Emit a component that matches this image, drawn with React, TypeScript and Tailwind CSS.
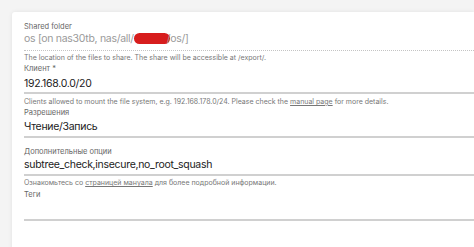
import React from 'react';

const font = { fontFamily: 'Inter, "Noto Sans", sans-serif' };

export default function App() {
  return (
    <div className="w-[474px] h-[247px] overflow-hidden bg-[#f4f4f4] pl-[12px] pt-[12px]" style={font}>
      <div className="h-[260px] bg-white rounded-tl-[3px] shadow-[0_0_4px_rgba(0,0,0,0.08)] pl-[12px] pt-[9px]">
        {/* Shared folder */}
        <div className="text-[7.5px] leading-[11px] text-[#666]">Shared folder</div>
        <div className="border-b border-dotted border-[#c4c4c4] pb-[4px]">
          <div className="text-[10.5px] tracking-[-0.3px] leading-[14px] text-[#9a9a9a] whitespace-nowrap">
            os [on nas30tb, nas/all/
            <span className="inline-block align-middle w-[36px] h-[11px] rounded-full bg-[#d71d1d] -mr-[3px] -mt-[2px]" />
            /os/]
          </div>
        </div>
        <div className="text-[7px] leading-[11px] text-[#777] mt-[1px] whitespace-nowrap">
          The location of the files to share. The share will be accessible at /export/.
        </div>

        {/* Клиент */}
        <div className="text-[7.5px] leading-[12px] text-[#666]">Клиент *</div>
        <div className="border-b-2 border-[#d0d0d0] pb-[1px] mt-[2px]">
          <div className="text-[10.5px] tracking-[-0.3px] leading-[14px] text-[#222]">192.168.0.0/20</div>
        </div>
        <div className="text-[7px] leading-[11px] text-[#777] mt-[2px] whitespace-nowrap">
          Clients allowed to mount the file system, e.g. 192.168.178.0/24. Please check the{' '}
          <span className="underline">manual page</span> for more details.
        </div>

        {/* Разрешения */}
        <div className="text-[7.5px] leading-[12px] text-[#666]">Разрешения</div>
        <div className="border-b-2 border-[#d0d0d0] pb-[2px] mt-[1px]">
          <div className="text-[10.5px] tracking-[-0.3px] leading-[14px] text-[#222]">Чтение/Запись</div>
        </div>

        {/* Дополнительные опции */}
        <div className="text-[7.5px] leading-[12px] text-[#666] mt-[8px]">Дополнительные опции</div>
        <div className="border-b-2 border-[#d0d0d0] pb-[2px]">
          <div className="text-[10.5px] tracking-[-0.3px] leading-[14px] text-[#222]">subtree_check,insecure,no_root_squash</div>
        </div>
        <div className="text-[7px] leading-[12px] text-[#777] mt-[1px] whitespace-nowrap">
          Ознакомьтесь со <span className="underline">страницей мануала</span> для более подробной информации.
        </div>

        {/* Теги */}
        <div className="text-[7.5px] leading-[12px] text-[#666]">Теги</div>
        <div className="border-b-2 border-[#d0d0d0] h-[20px]" />
      </div>
    </div>
  );
}
